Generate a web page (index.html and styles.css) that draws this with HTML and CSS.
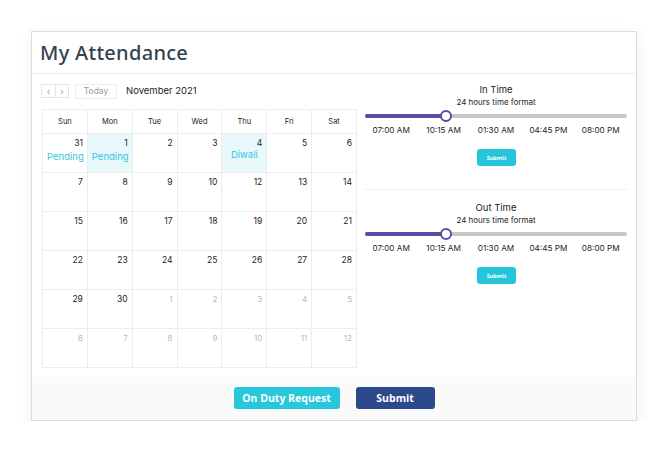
FILE: index.html
```html
<!DOCTYPE html>
<html lang="en">
<head>
<meta charset="utf-8">
<title>My Attendance</title>
<link rel="stylesheet" href="styles.css">
</head>
<body>
<div class="card">
  <div class="card-header"><h1 class="title">My Attendance</h1></div>
  <div class="card-body">
    <div class="calendar">
      <div class="toolbar">
        <div class="nav-group">
          <span class="nav-btn">&#8249;</span><span class="nav-btn">&#8250;</span>
        </div>
        <span class="today-btn">Today</span>
        <span class="month">November 2021</span>
      </div>
      <div class="grid">
        <div class="dow">Sun</div><div class="dow">Mon</div><div class="dow">Tue</div><div class="dow">Wed</div><div class="dow">Thu</div><div class="dow">Fri</div><div class="dow">Sat</div>

        <div class="day"><span class="num">31</span><span class="event">Pending</span></div>
        <div class="day hl"><span class="num">1</span><span class="event">Pending</span></div>
        <div class="day"><span class="num">2</span></div>
        <div class="day"><span class="num">3</span></div>
        <div class="day hl"><span class="num">4</span><span class="event ev-up">Diwali</span></div>
        <div class="day"><span class="num">5</span></div>
        <div class="day"><span class="num">6</span></div>

        <div class="day"><span class="num">7</span></div>
        <div class="day"><span class="num">8</span></div>
        <div class="day"><span class="num">9</span></div>
        <div class="day"><span class="num">10</span></div>
        <div class="day"><span class="num">12</span></div>
        <div class="day"><span class="num">13</span></div>
        <div class="day"><span class="num">14</span></div>

        <div class="day"><span class="num">15</span></div>
        <div class="day"><span class="num">16</span></div>
        <div class="day"><span class="num">17</span></div>
        <div class="day"><span class="num">18</span></div>
        <div class="day"><span class="num">19</span></div>
        <div class="day"><span class="num">20</span></div>
        <div class="day"><span class="num">21</span></div>

        <div class="day"><span class="num">22</span></div>
        <div class="day"><span class="num">23</span></div>
        <div class="day"><span class="num">24</span></div>
        <div class="day"><span class="num">25</span></div>
        <div class="day"><span class="num">26</span></div>
        <div class="day"><span class="num">27</span></div>
        <div class="day"><span class="num">28</span></div>

        <div class="day"><span class="num">29</span></div>
        <div class="day"><span class="num">30</span></div>
        <div class="day other"><span class="num">1</span></div>
        <div class="day other"><span class="num">2</span></div>
        <div class="day other"><span class="num">3</span></div>
        <div class="day other"><span class="num">4</span></div>
        <div class="day other"><span class="num">5</span></div>

        <div class="day other"><span class="num">6</span></div>
        <div class="day other"><span class="num">7</span></div>
        <div class="day other"><span class="num">8</span></div>
        <div class="day other"><span class="num">9</span></div>
        <div class="day other"><span class="num">10</span></div>
        <div class="day other"><span class="num">11</span></div>
        <div class="day other"><span class="num">12</span></div>
      </div>
    </div>

    <div class="times">
      <div class="time-block">
        <div class="t-title">In Time</div>
        <div class="t-sub">24 hours time format</div>
        <div class="slider">
          <div class="track"><div class="fill" style="width:81px"></div></div>
          <div class="thumb" style="left:81px"></div>
        </div>
        <div class="labels"><span>07:00 AM</span><span>10:15 AM</span><span>01:30 AM</span><span>04:45 PM</span><span>08:00 PM</span></div>
        <div class="small-wrap"><button class="small-btn">Submit</button></div>
      </div>
      <div class="divider"></div>
      <div class="time-block">
        <div class="t-title">Out Time</div>
        <div class="t-sub">24 hours time format</div>
        <div class="slider">
          <div class="track"><div class="fill" style="width:81px"></div></div>
          <div class="thumb" style="left:81px"></div>
        </div>
        <div class="labels"><span>07:00 AM</span><span>10:15 AM</span><span>01:30 AM</span><span>04:45 PM</span><span>08:00 PM</span></div>
        <div class="small-wrap"><button class="small-btn">Submit</button></div>
      </div>
    </div>
  </div>
  <div class="card-footer">
    <button class="btn btn-cyan">On Duty Request</button>
    <button class="btn btn-navy">Submit</button>
  </div>
</div>
</body>
</html>
```

FILE: styles.css
```css
* { box-sizing: border-box; }
html, body { margin: 0; padding: 0; background: #ffffff; }
body {
  font-family: Inter, "Noto Sans", "Liberation Sans", sans-serif;
  color: #222;
  padding: 31px 0 0 31px;
}
.card {
  width: 606px;
  height: 390px;
  border: 1px solid #dcdcdc;
  background: #fff;
  box-shadow: 0 3px 14px rgba(0, 0, 0, 0.07);
  display: flex;
  flex-direction: column;
}
.card-header {
  height: 42px;
  border-bottom: 1px solid #ececec;
  display: flex;
  align-items: center;
  padding-left: 8px;
}
.title {
  margin: 0;
  font-family: "Noto Sans", "Open Sans", sans-serif;
  font-weight: 500;
  font-size: 20px;
  letter-spacing: 0.3px;
  color: #33434f;
  line-height: 1;
  padding-top: 1px;
}
.card-body {
  flex: 1;
  display: flex;
  padding: 10px 9px 0 10px;
  gap: 8px;
}
.calendar { width: 315px; }
.toolbar {
  display: flex;
  align-items: center;
  height: 14px;
  margin-bottom: 11px;
}
.nav-group {
  display: flex;
  border: 1px solid #e4e4e4;
  height: 14px;
  margin-left: -1px;
}
.nav-btn {
  width: 13px;
  height: 12px;
  display: flex;
  align-items: center;
  justify-content: center;
  font-size: 9px;
  line-height: 1;
  color: #9a9a9a;
}
.nav-btn + .nav-btn { border-left: 1px solid #e4e4e4; }
.today-btn {
  margin-left: 6px;
  width: 42px;
  height: 15px;
  border: 1px solid #ececec;
  display: flex;
  align-items: center;
  justify-content: center;
  font-size: 8.5px;
  color: #9a9a9a;
}
.month {
  margin-left: 9px;
  font-size: 9.5px;
  color: #1e1e1e;
  margin-top: -2px;
}
.grid {
  width: 315px;
  height: 259px;
  display: grid;
  grid-template-columns: repeat(7, minmax(0, 1fr));
  grid-template-rows: 23px repeat(6, minmax(0, 1fr));
  gap: 1px;
  background: #ededed;
  border: 1px solid #ededed;
}
.dow {
  background: #fff;
  display: flex;
  align-items: center;
  justify-content: center;
  font-size: 7.5px;
  color: #222;
}
.day {
  background: #fff;
  display: flex;
  flex-direction: column;
  padding: 3px 4px 0 2px;
  overflow: hidden;
}
.day.hl { background: #e9f8fb; }
.num {
  text-align: right;
  font-size: 8.5px;
  line-height: 12px;
  color: #1c1c1c;
}
.day.other .num { color: #b8b8b8; font-size: 8px; }
.event {
  text-align: center;
  font-size: 9.5px;
  color: #35c5df;
  margin-top: 2px;
  padding-left: 2px;
  white-space: nowrap;
}
.event.ev-up { margin-top: 0; }
.times {
  width: 262px;
  display: flex;
  flex-direction: column;
}
.time-block { display: flex; flex-direction: column; }
.t-title {
  text-align: center;
  font-size: 9.5px;
  line-height: 12px;
  color: #1e1e1e;
}
.t-sub {
  text-align: center;
  font-size: 8px;
  line-height: 12px;
  color: #1e1e1e;
}
.slider {
  position: relative;
  height: 14px;
  margin-top: 1px;
  display: flex;
  align-items: center;
}
.track {
  width: 100%;
  height: 4px;
  border-radius: 2px;
  background: #c6c6c6;
  overflow: hidden;
}
.fill { height: 100%; background: #5a4c9f; }
.thumb {
  position: absolute;
  top: 1px;
  width: 12px;
  height: 12px;
  margin-left: -6px;
  border-radius: 50%;
  background: #fff;
  border: 2.5px solid #5a4c9f;
}
.labels {
  display: grid;
  grid-template-columns: repeat(5, 1fr);
  line-height: 14px;
  font-size: 8.2px;
  color: #1e1e1e;
  text-align: center;
}
.small-wrap {
  display: flex;
  justify-content: center;
  margin-top: 12px;
}
.small-btn {
  width: 39px;
  height: 17px;
  border: none;
  border-radius: 3px;
  background: #25c6dc;
  color: #fff;
  font-family: "Open Sans", sans-serif;
  font-weight: 700;
  font-size: 5.5px;
  padding: 0;
  padding-left: 1px;
}
.divider {
  height: 1px;
  background: #efefef;
  margin: 23px 0 12px;
}
.card-footer {
  height: 43px;
  background: #fafafa;
  display: flex;
  align-items: center;
  justify-content: center;
  gap: 16px;
  padding-bottom: 1px;
}
.btn {
  height: 22px;
  border: none;
  border-radius: 3px;
  color: #fff;
  font-family: "Open Sans", sans-serif;
  font-weight: 700;
  font-size: 10.5px;
  padding: 0;
}
.btn-cyan { width: 106px; background: #27c7dc; }
.btn-navy { width: 79px; background: #2c4a8b; }
```
